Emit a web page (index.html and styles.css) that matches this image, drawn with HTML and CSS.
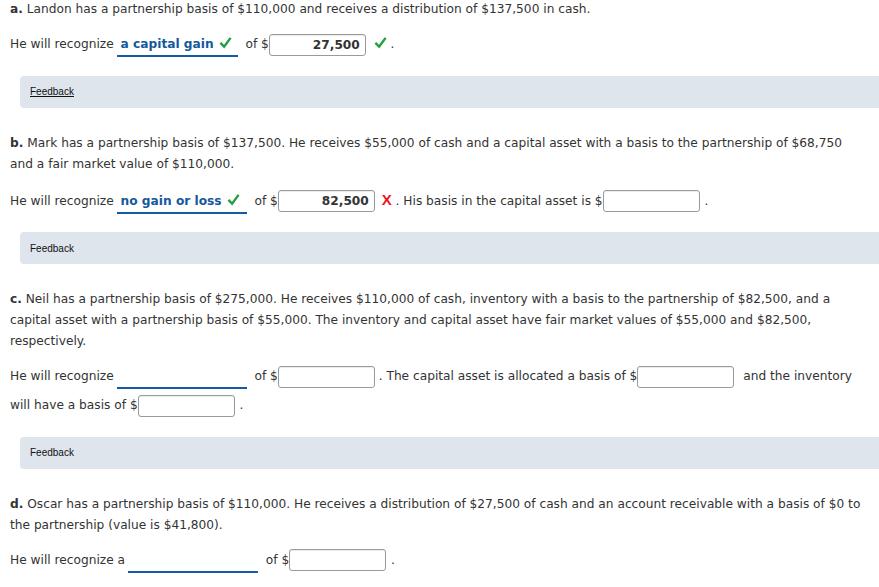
FILE: index.html
```html
<!DOCTYPE html>
<html lang="en">

<head>
    <meta charset="UTF-8">
    <meta name="viewport" content="width=device-width, initial-scale=1.0">
    <title>Partnership distributions</title>
    <link rel="stylesheet" href="styles.css">
</head>

<body>
    <div class="page">
        <!-- a -->
        <div class="part">
            <p class="question"><b>a.</b> Landon has a partnership basis of $110,000 and receives a distribution of $137,500 in cash.</p>
            <div class="answer">
                He will recognize <span class="pick w121">a capital gain <svg class="tick" viewBox="0 0 14 14"><path d="M1.5 7.5 L5.5 11.5 L12.5 2"/></svg></span>
                <span class="of">of $</span><span class="box filled">27,500</span>
                <svg class="tick mark" viewBox="0 0 14 14"><path d="M1.5 7.5 L5.5 11.5 L12.5 2"/></svg> .
            </div>
            <div class="feedback"><a href="#">Feedback</a></div>
        </div>

        <!-- b -->
        <div class="part">
            <p class="question"><b>b.</b> Mark has a partnership basis of $137,500. He receives $55,000 of cash and a capital asset with a basis to the partnership of $68,750 and a fair market value of $110,000.</p>
            <div class="answer">
                He will recognize <span class="pick w130">no gain or loss <svg class="tick" viewBox="0 0 14 14"><path d="M1.5 7.5 L5.5 11.5 L12.5 2"/></svg></span>
                <span class="of">of $</span><span class="box filled">82,500</span>
                <span class="cross">X</span> . His basis in the capital asset is $<span class="box"></span> <span class="dot">.</span>
            </div>
            <div class="feedback"><span>Feedback</span></div>
        </div>

        <!-- c -->
        <div class="part">
            <p class="question"><b>c.</b> Neil has a partnership basis of $275,000. He receives $110,000 of cash, inventory with a basis to the partnership of $82,500, and a capital asset with a partnership basis of $55,000. The inventory and capital asset have fair market values of $55,000 and $82,500, respectively.</p>
            <div class="answer">
                He will recognize <span class="pick w130">&nbsp;</span>
                <span class="of">of $</span><span class="box"></span> . The capital asset is allocated a basis of $<span class="box"></span> <span class="gap">and the inventory</span> will have a basis of $<span class="box"></span> <span class="dot">.</span>
            </div>
            <div class="feedback"><span>Feedback</span></div>
        </div>

        <!-- d -->
        <div class="part">
            <p class="question"><b>d.</b> Oscar has a partnership basis of $110,000. He receives a distribution of $27,500 of cash and an account receivable with a basis of $0 to the partnership (value is $41,800).</p>
            <div class="answer">
                He will recognize a <span class="pick w130">&nbsp;</span>
                <span class="of">of $</span><span class="box"></span> <span class="dot">.</span>
            </div>
        </div>
    </div>
</body>

</html>
```

FILE: styles.css
```css
* {
    margin: 0;
    padding: 0;
    box-sizing: border-box;
}

html,
body {
    width: 100%;
    overflow-x: hidden;
}

body {
    background: #fff;
    color: #333;
    font-family: "DejaVu Sans", Verdana, sans-serif;
    font-size: 12.2px;
}

.page {
    margin-top: -1px;
    padding: 0 15px 0 10px;
}

.part + .part {
    margin-top: 25px;
}

.question {
    line-height: 20.8px;
}

.answer {
    margin-top: 10.5px;
    line-height: 29px;
}

.pick {
    display: inline-block;
    line-height: 16px;
    margin-left: -1px;
    padding: 0 0 3px 4px;
    vertical-align: baseline;
    white-space: nowrap;
    border-bottom: 2px solid #155ba3;
    color: #16589c;
    font-weight: bold;
}

.w121 {
    width: 121px;
}

.w130 {
    width: 130px;
}

.tick {
    width: 13px;
    height: 13px;
    margin-left: 1px;
    vertical-align: -1px;
}

.tick path {
    fill: none;
    stroke: #22a03f;
    stroke-width: 2.6;
}

.mark {
    margin-left: 4px;
}

.of {
    margin-left: 4px;
}

.box {
    display: inline-block;
    width: 97px;
    height: 22px;
    line-height: 20px;
    vertical-align: middle;
    border: 1px solid #9a9a9a;
    border-radius: 3px;
    box-shadow: inset 0 1px 1px rgba(0, 0, 0, 0.08);
    padding-right: 5px;
    text-align: right;
    font-weight: bold;
}

.cross {
    margin-left: 3px;
    color: #e8141c;
    font-family: "Liberation Sans", Arial, sans-serif;
    font-weight: bold;
    font-size: 15px;
}

.dot {
    margin-left: 1px;
}

.gap {
    margin-left: 5px;
}

.feedback {
    margin-top: 16.5px;
    margin-left: 10px;
    margin-right: -40px;
    height: 32px;
    padding-left: 10px;
    border-radius: 4px;
    background: #dee5ec;
    display: flex;
    align-items: center;
    font-family: "Liberation Sans", Arial, sans-serif;
    font-size: 10px;
    color: #111;
}

.feedback a {
    color: #111;
}
```
